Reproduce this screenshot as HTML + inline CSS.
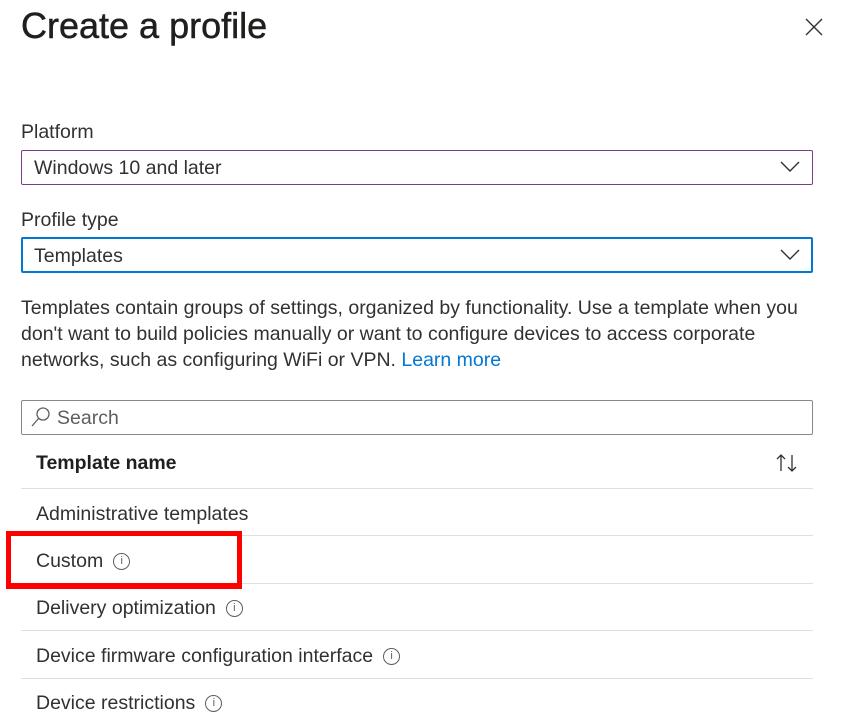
<!DOCTYPE html>
<html><head><style>
body{margin:0;width:844px;height:721px;background:#fff;font-family:"Liberation Sans",sans-serif;color:#323130;position:relative;overflow:hidden}
.a{position:absolute;white-space:nowrap}
.t{font-size:19.5px}
.box{position:absolute;left:21px;width:792px;border:1px solid #8a8886;border-radius:2px;box-sizing:border-box}
.sep{position:absolute;left:21px;width:792px;height:1px;background:#e1dfdd}
.info{display:inline-block;width:17px;height:17px;border:1px solid #605e5c;border-radius:50%;box-sizing:border-box;font-size:11px;text-align:center;line-height:15px;vertical-align:3px;margin-left:10px;color:#605e5c}
</style></head><body>
<div class="a" style="left:21px;top:5px;font-size:36px;color:#201f1e;-webkit-text-stroke:0.5px #201f1e">Create a profile</div>
<svg class="a" style="left:804px;top:17px" width="20" height="20"><path d="M2 2L18 18M18 2L2 18" stroke="#323130" stroke-width="1.4"/></svg>
<div class="a t" style="left:21px;top:121px">Platform</div>
<div class="box" style="top:150px;height:35px;border-color:#7a3d8a"></div>
<div class="a t" style="left:34px;top:157px">Windows 10 and later</div>
<svg class="a" style="left:780px;top:161px" width="20" height="12"><path d="M1 1L10 10L19 1" fill="none" stroke="#323130" stroke-width="1.4"/></svg>
<div class="a t" style="left:21px;top:209px">Profile type</div>
<div class="box" style="top:237px;height:36px;border:2px solid #0078d4"></div>
<div class="a t" style="left:34px;top:245px">Templates</div>
<svg class="a" style="left:780px;top:249px" width="20" height="12"><path d="M1 1L10 10L19 1" fill="none" stroke="#323130" stroke-width="1.4"/></svg>
<div class="a t" style="left:21px;top:295px;line-height:26px">Templates contain groups of settings, organized by functionality. Use a template when you<br>don't want to build policies manually or want to configure devices to access corporate<br>networks, such as configuring WiFi or VPN. <span style="color:#0078d4">Learn more</span></div>
<div class="box" style="top:400px;height:35px"></div>
<svg class="a" style="left:30px;top:406px" width="22" height="22"><circle cx="13" cy="8" r="6" fill="none" stroke="#605e5c" stroke-width="1.3"/><path d="M9 12L2 20" stroke="#605e5c" stroke-width="1.3"/></svg>
<div class="a t" style="left:57px;top:407px;color:#605e5c">Search</div>
<div class="a t" style="left:36px;top:452px;font-weight:bold;color:#201f1e">Template name</div>
<svg class="a" style="left:774px;top:452px" width="26" height="22"><path d="M7 19V3M3 7L7 3L11 7M18 3V19M14 15L18 19L22 15" fill="none" stroke="#323130" stroke-width="1.3"/></svg>
<div class="sep" style="top:488px"></div>
<div class="a t" style="left:36px;top:503px">Administrative templates</div>
<div class="sep" style="top:535px"></div>
<div class="a t" style="left:36px;top:550px">Custom<span class="info">i</span></div>
<div class="sep" style="top:583px"></div>
<div class="a t" style="left:36px;top:597px">Delivery optimization<span class="info">i</span></div>
<div class="sep" style="top:630px"></div>
<div class="a t" style="left:36px;top:645px">Device firmware configuration interface<span class="info">i</span></div>
<div class="sep" style="top:678px"></div>
<div class="a t" style="left:36px;top:692px">Device restrictions<span class="info">i</span></div>
<div class="a" style="left:6px;top:531px;width:226px;height:47px;border:5px solid #f00;border-bottom-width:6px"></div>
</body></html>
